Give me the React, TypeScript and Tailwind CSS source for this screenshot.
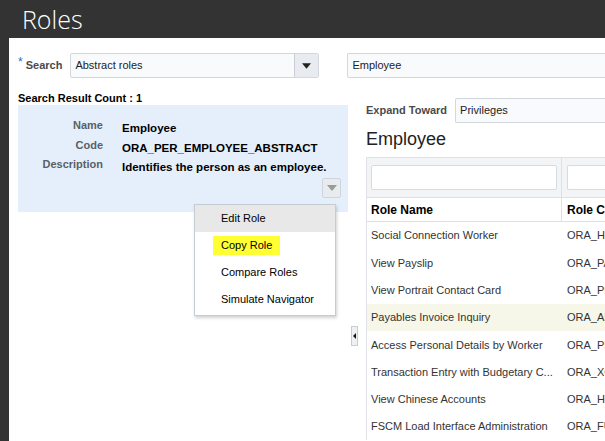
import { Fragment } from "react";

type RoleRow = { name: string; code: string; hover?: boolean };

const rows: RoleRow[] = [
  { name: "Social Connection Worker", code: "ORA_HRC_SOCIAL_CONNECTION_WORKER" },
  { name: "View Payslip", code: "ORA_PAY_VIEW_PAYSLIP" },
  { name: "View Portrait Contact Card", code: "ORA_PER_VIEW_PORTRAIT_CONTACT_CARD" },
  { name: "Payables Invoice Inquiry", code: "ORA_AP_PAYABLES_INVOICE_INQUIRY", hover: true },
  { name: "Access Personal Details by Worker", code: "ORA_PER_ACCESS_PERSONAL_DETAILS" },
  { name: "Transaction Entry with Budgetary C...", code: "ORA_XCC_TRANSACTION_ENTRY" },
  { name: "View Chinese Accounts", code: "ORA_HR_VIEW_CHINESE_ACCOUNTS" },
  { name: "FSCM Load Interface Administration", code: "ORA_FUN_FSCM_LOAD_INTERFACE" },
];

const menuItems = ["Edit Role", "Copy Role", "Compare Roles", "Simulate Navigator"];

function DownTriangle({ className }: { className: string }) {
  return (
    <svg viewBox="0 0 10 6" className={className} aria-hidden="true">
      <path d="M0 0h10L5 6z" fill="currentColor" />
    </svg>
  );
}

function ActionsMenu() {
  return (
    <div className="absolute left-[185px] top-[118px] z-10 w-[142px] border border-[#c4ccd4] bg-white pb-[2px] shadow-[1px_2px_3px_rgba(0,0,0,0.18)]">
      {menuItems.map((item, i) => (
        <div
          key={item}
          className={`flex h-[27px] items-center pl-[26px] text-[11px] text-black ${
            i === 0 ? "bg-[#e8e8e8]" : ""
          }`}
        >
          {i === 1 ? (
            <span className="-ml-[8px] bg-[#ffff33] px-[8px] py-[1px]">{item}</span>
          ) : (
            item
          )}
        </div>
      ))}
    </div>
  );
}

export default function App() {
  return (
    <div className="flex h-[441px] w-[605px] flex-col overflow-hidden bg-[#333333] font-['Liberation_Sans',Arial,sans-serif]">
      <header className="flex h-[38px] shrink-0 items-center pl-[22px]">
        <h1 className="font-['Open_Sans',sans-serif] text-[25px] font-light leading-none text-white">
          Roles
        </h1>
      </header>

      <main className="ml-[9px] flex min-h-0 flex-1 flex-col bg-white">
        {/* search row */}
        <div className="mt-[15px] flex h-[25px] items-center">
          <span className="ml-[9px] self-start pt-[3px] text-[12px] leading-none text-[#1a6fd1]">*</span>
          <span className="ml-[3px] text-[11px] font-bold text-[#4a4a4a]">Search</span>
          <div className="ml-[8px] flex h-[25px] w-[249px] items-stretch rounded-[2px] border border-[#d3d8de] bg-[#f9fafc]">
            <span className="flex flex-1 items-center pl-[4px] text-[11px] text-[#222]">Abstract roles</span>
            <span className="flex w-[24px] items-center justify-center rounded-r-[2px] border-l border-[#c9cfd6] bg-[#e8ebef]">
              <DownTriangle className="h-[6px] w-[9px] text-[#222]" />
            </span>
          </div>
          <div className="ml-[28px] flex h-[25px] flex-1 items-center rounded-l-[2px] border border-r-0 border-[#d3d8de] bg-[#f9fafc] pl-[4px] text-[11px] text-[#222]">
            Employee
          </div>
        </div>

        <div className="mt-[8px] flex min-h-0 flex-1">
          {/* results column */}
          <section className="relative w-[342px] shrink-0">
            <div className="ml-[9px] pt-[5px] text-[11px] font-bold leading-[14px] text-black">
              Search Result Count : 1
            </div>
            <div className="ml-[9px] flex h-[107px] w-[330px] flex-col bg-[#e4effb] pt-[13px]">
              <dl className="grid grid-cols-[85px_1fr] gap-x-[19px] gap-y-[2.5px] text-[11px] leading-[14px]">
                {[
                  ["Name", "Employee"],
                  ["Code", "ORA_PER_EMPLOYEE_ABSTRACT"],
                  ["Description", "Identifies the person as an employee."],
                ].map(([k, v]) => (
                  <Fragment key={k}>
                    <dt className="text-right font-bold text-[#5a5f66]">{k}</dt>
                    <dd className="pt-[3px] text-[11.5px] font-bold text-black">{v}</dd>
                  </Fragment>
                ))}
              </dl>
              <div className="mr-[7px] mt-[4px] flex justify-end">
                <span className="flex h-[20px] w-[19px] items-center justify-center rounded-[2px] border border-[#cfd5dc] bg-[#e9ecef]">
                  <DownTriangle className="h-[6px] w-[10px] text-[#9a9a9a]" />
                </span>
              </div>
            </div>
            <ActionsMenu />
          </section>

          {/* splitter */}
          <div className="w-[15px] shrink-0 pt-[240px]">
            <div className="flex h-[20px] w-[7px] items-center justify-center border border-[#c6ccd3] bg-[#eef0f2]">
              <svg viewBox="0 0 3 6" className="h-[6px] w-[3px]" aria-hidden="true">
                <path d="M3 0v6L0 3z" fill="#111" />
              </svg>
            </div>
          </div>

          {/* detail column */}
          <section className="min-w-0 flex-1">
            <div className="mt-[12px] flex h-[25px] items-center">
              <span className="text-[11px] font-bold text-[#4a4a4a]">Expand Toward</span>
              <div className="ml-[8px] flex h-[25px] flex-1 items-center rounded-l-[2px] border border-r-0 border-[#d3d8de] bg-[#f9fafc] pl-[4px] text-[11px] text-[#222]">
                Privileges
              </div>
            </div>
            <h2 className="mt-[4px] h-[30px] text-[18px] leading-[24px] text-[#222]">Employee</h2>

            <div className="grid grid-cols-[195px_1fr] border-l border-[#e0e3e7]">
              <div className="flex h-[41px] items-center border-y border-r border-[#dde1e6] bg-[#f3f4f6] px-[4px]">
                <div className="h-[25px] w-full rounded-[2px] border border-[#d6dbe1] bg-white" />
              </div>
              <div className="flex h-[41px] items-center border-y border-[#dde1e6] bg-[#f3f4f6] pl-[5px]">
                <div className="h-[25px] w-full rounded-l-[2px] border border-r-0 border-[#d6dbe1] bg-white" />
              </div>

              <div className="flex h-[24px] items-center border-b border-r border-[#dde1e6] pl-[4px] text-[12px] font-bold text-black">
                Role Name
              </div>
              <div className="flex h-[24px] items-center overflow-hidden whitespace-nowrap border-b border-[#dde1e6] pl-[5px] text-[12px] font-bold text-black">
                Role Code
              </div>

              {rows.map((r) => (
                <Fragment key={r.name}>
                  <div
                    className={`flex h-[27.3px] items-center overflow-hidden whitespace-nowrap pl-[4px] text-[11px] text-[#333] ${
                      r.hover ? "bg-[#f6f7e9]" : ""
                    }`}
                  >
                    {r.name}
                  </div>
                  <div
                    className={`flex h-[27.3px] items-center overflow-hidden whitespace-nowrap pl-[5px] text-[11px] text-[#333] ${
                      r.hover ? "bg-[#f6f7e9]" : ""
                    }`}
                  >
                    {r.code}
                  </div>
                </Fragment>
              ))}
            </div>
          </section>
        </div>
      </main>
    </div>
  );
}
